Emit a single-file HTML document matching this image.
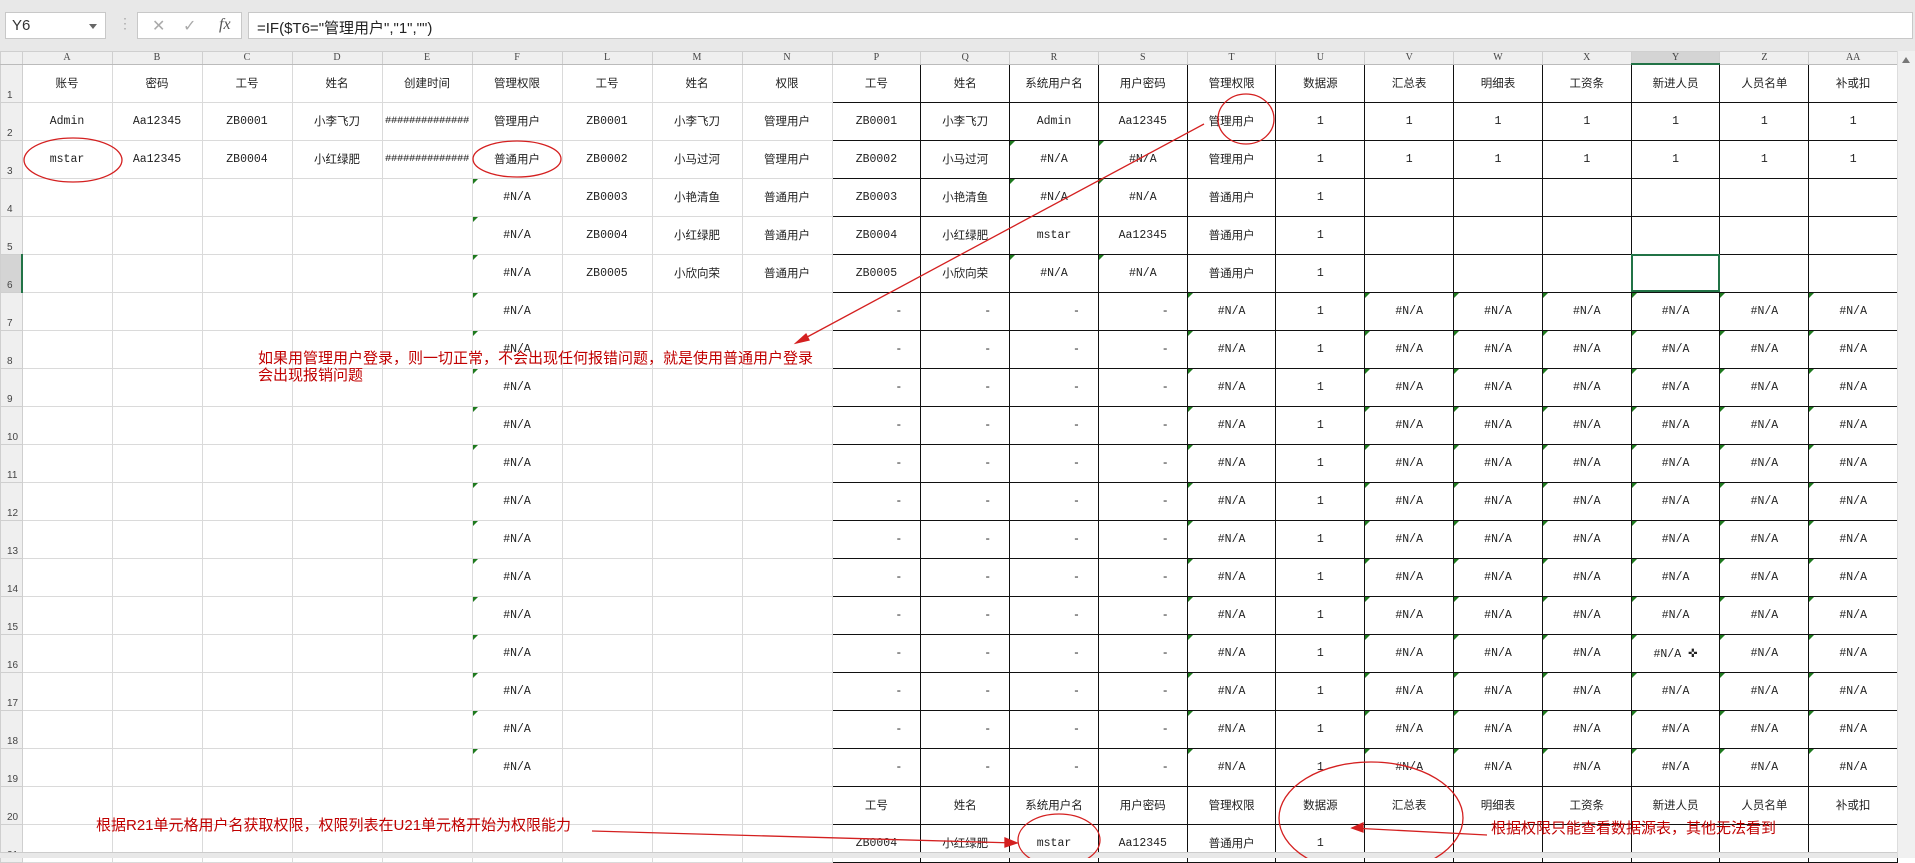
<!DOCTYPE html>
<html><head><meta charset="utf-8"><style>
*{margin:0;padding:0;box-sizing:border-box}
body{width:1915px;height:858px;overflow:hidden;background:#fff;position:relative;font-family:"Liberation Mono","Noto Sans CJK SC",monospace;}
.top{position:absolute;left:0;top:0;width:1915px;height:51px;background:#e8e8e8}
.nb{position:absolute;left:5px;top:12px;width:101px;height:27px;background:#fff;border:1px solid #c8c8c8;font:15px "Liberation Sans",sans-serif;color:#333;padding:4px 0 0 6px}
.nb:after{content:"";position:absolute;right:8px;top:11px;border:4px solid transparent;border-top:5px solid #666}
.fxb{position:absolute;left:137px;top:12px;width:105px;height:27px;background:#fff;border:1px solid #c8c8c8;color:#aaa;font:16px "Liberation Sans",sans-serif}
.fm{position:absolute;left:248px;top:12px;width:1665px;height:27px;background:#fff;border:1px solid #c8c8c8;font:15px "Liberation Sans","Noto Sans CJK SC",sans-serif;color:#222;padding:4px 0 0 8px}
table{position:absolute;left:0;top:51px;border-collapse:collapse;table-layout:fixed;width:1897.5px}
td{border:1px solid #dadada;text-align:center;font-size:11.5px;color:#222;white-space:nowrap;overflow:hidden;position:relative;height:38px;padding:0}
td.hs{font-size:10.5px;letter-spacing:-0.3px}
tr.h td{height:12.5px;background:#efefef;color:#444;font:10px "Liberation Serif",serif;border-color:#cfcfcf;border-bottom:1px solid #bbb}
td.r{background:#efefef;color:#444;font:10px "Liberation Sans",sans-serif;text-align:left;vertical-align:bottom;padding:0 0 1px 6px;border-color:#cfcfcf}
td.b{border:1.5px solid #111}
td.d{text-align:right;padding-right:18px}
td.g:before{content:"";position:absolute;left:0;top:0;border-left:5px solid #1e7a1e;border-bottom:5px solid transparent}
td.sel{outline:2px solid #217346;outline-offset:-2px}
.ann{position:absolute;color:#c00000;font:15px "Liberation Sans","Noto Sans CJK SC",sans-serif;line-height:17px}
.sb{position:absolute;left:1897px;top:51px;width:18px;height:807px;background:#f0f0f0;border-left:1px solid #ddd}
</style></head><body>
<div class="top">
<div class="nb">Y6</div>
<div style="position:absolute;left:118px;top:16px;color:#aaa;font-size:14px">⋮</div>
<div class="fxb"><span style="position:absolute;left:14px;top:3px">✕</span><span style="position:absolute;left:45px;top:3px">✓</span><span style="position:absolute;left:81px;top:3px;font-style:italic;font-family:'Liberation Serif',serif;color:#555">fx</span></div>
<div class="fm">=IF($T6="管理用户","1","")</div>
</div>
<table>
<colgroup><col style="width:21.5px"><col span="9" style="width:90px"><col span="12" style="width:88.8px"></colgroup>
<tr class="h"><td></td><td>A</td><td>B</td><td>C</td><td>D</td><td>E</td><td>F</td><td>L</td><td>M</td><td>N</td><td>P</td><td>Q</td><td>R</td><td>S</td><td>T</td><td>U</td><td>V</td><td>W</td><td>X</td><td style="background:#d4d4d4;border-bottom:2px solid #217346">Y</td><td>Z</td><td>AA</td></tr>
<tr><td class="r">1</td><td>账号</td><td>密码</td><td>工号</td><td>姓名</td><td>创建时间</td><td>管理权限</td><td>工号</td><td>姓名</td><td>权限</td><td class="b">工号</td><td class="b">姓名</td><td class="b">系统用户名</td><td class="b">用户密码</td><td class="b">管理权限</td><td class="b">数据源</td><td class="b">汇总表</td><td class="b">明细表</td><td class="b">工资条</td><td class="b">新进人员</td><td class="b">人员名单</td><td class="b">补或扣</td></tr>
<tr><td class="r">2</td><td>Admin</td><td>Aa12345</td><td>ZB0001</td><td>小李飞刀</td><td class="hs">##############</td><td>管理用户</td><td>ZB0001</td><td>小李飞刀</td><td>管理用户</td><td class="b">ZB0001</td><td class="b">小李飞刀</td><td class="b">Admin</td><td class="b">Aa12345</td><td class="b">管理用户</td><td class="b">1</td><td class="b">1</td><td class="b">1</td><td class="b">1</td><td class="b">1</td><td class="b">1</td><td class="b">1</td></tr>
<tr><td class="r">3</td><td>mstar</td><td>Aa12345</td><td>ZB0004</td><td>小红绿肥</td><td class="hs">##############</td><td>普通用户</td><td>ZB0002</td><td>小马过河</td><td>管理用户</td><td class="b">ZB0002</td><td class="b">小马过河</td><td class="b g">#N/A</td><td class="b g">#N/A</td><td class="b">管理用户</td><td class="b">1</td><td class="b">1</td><td class="b">1</td><td class="b">1</td><td class="b">1</td><td class="b">1</td><td class="b">1</td></tr>
<tr><td class="r">4</td><td></td><td></td><td></td><td></td><td></td><td class="g">#N/A</td><td>ZB0003</td><td>小艳清鱼</td><td>普通用户</td><td class="b">ZB0003</td><td class="b">小艳清鱼</td><td class="b g">#N/A</td><td class="b g">#N/A</td><td class="b">普通用户</td><td class="b">1</td><td class="b"></td><td class="b"></td><td class="b"></td><td class="b"></td><td class="b"></td><td class="b"></td></tr>
<tr><td class="r">5</td><td></td><td></td><td></td><td></td><td></td><td class="g">#N/A</td><td>ZB0004</td><td>小红绿肥</td><td>普通用户</td><td class="b">ZB0004</td><td class="b">小红绿肥</td><td class="b">mstar</td><td class="b">Aa12345</td><td class="b">普通用户</td><td class="b">1</td><td class="b"></td><td class="b"></td><td class="b"></td><td class="b"></td><td class="b"></td><td class="b"></td></tr>
<tr><td class="r" style="background:#d4d4d4;border-right:2px solid #217346">6</td><td></td><td></td><td></td><td></td><td></td><td class="g">#N/A</td><td>ZB0005</td><td>小欣向荣</td><td>普通用户</td><td class="b">ZB0005</td><td class="b">小欣向荣</td><td class="b g">#N/A</td><td class="b g">#N/A</td><td class="b">普通用户</td><td class="b">1</td><td class="b"></td><td class="b"></td><td class="b"></td><td class="b sel"></td><td class="b"></td><td class="b"></td></tr>
<tr><td class="r">7</td><td></td><td></td><td></td><td></td><td></td><td class="g">#N/A</td><td></td><td></td><td></td><td class="b d">-</td><td class="b d">-</td><td class="b d">-</td><td class="b d">-</td><td class="b g">#N/A</td><td class="b">1</td><td class="b g">#N/A</td><td class="b g">#N/A</td><td class="b g">#N/A</td><td class="b g">#N/A</td><td class="b g">#N/A</td><td class="b g">#N/A</td></tr>
<tr><td class="r">8</td><td></td><td></td><td></td><td></td><td></td><td class="g">#N/A</td><td></td><td></td><td></td><td class="b d">-</td><td class="b d">-</td><td class="b d">-</td><td class="b d">-</td><td class="b g">#N/A</td><td class="b">1</td><td class="b g">#N/A</td><td class="b g">#N/A</td><td class="b g">#N/A</td><td class="b g">#N/A</td><td class="b g">#N/A</td><td class="b g">#N/A</td></tr>
<tr><td class="r">9</td><td></td><td></td><td></td><td></td><td></td><td class="g">#N/A</td><td></td><td></td><td></td><td class="b d">-</td><td class="b d">-</td><td class="b d">-</td><td class="b d">-</td><td class="b g">#N/A</td><td class="b">1</td><td class="b g">#N/A</td><td class="b g">#N/A</td><td class="b g">#N/A</td><td class="b g">#N/A</td><td class="b g">#N/A</td><td class="b g">#N/A</td></tr>
<tr><td class="r">10</td><td></td><td></td><td></td><td></td><td></td><td class="g">#N/A</td><td></td><td></td><td></td><td class="b d">-</td><td class="b d">-</td><td class="b d">-</td><td class="b d">-</td><td class="b g">#N/A</td><td class="b">1</td><td class="b g">#N/A</td><td class="b g">#N/A</td><td class="b g">#N/A</td><td class="b g">#N/A</td><td class="b g">#N/A</td><td class="b g">#N/A</td></tr>
<tr><td class="r">11</td><td></td><td></td><td></td><td></td><td></td><td class="g">#N/A</td><td></td><td></td><td></td><td class="b d">-</td><td class="b d">-</td><td class="b d">-</td><td class="b d">-</td><td class="b g">#N/A</td><td class="b">1</td><td class="b g">#N/A</td><td class="b g">#N/A</td><td class="b g">#N/A</td><td class="b g">#N/A</td><td class="b g">#N/A</td><td class="b g">#N/A</td></tr>
<tr><td class="r">12</td><td></td><td></td><td></td><td></td><td></td><td class="g">#N/A</td><td></td><td></td><td></td><td class="b d">-</td><td class="b d">-</td><td class="b d">-</td><td class="b d">-</td><td class="b g">#N/A</td><td class="b">1</td><td class="b g">#N/A</td><td class="b g">#N/A</td><td class="b g">#N/A</td><td class="b g">#N/A</td><td class="b g">#N/A</td><td class="b g">#N/A</td></tr>
<tr><td class="r">13</td><td></td><td></td><td></td><td></td><td></td><td class="g">#N/A</td><td></td><td></td><td></td><td class="b d">-</td><td class="b d">-</td><td class="b d">-</td><td class="b d">-</td><td class="b g">#N/A</td><td class="b">1</td><td class="b g">#N/A</td><td class="b g">#N/A</td><td class="b g">#N/A</td><td class="b g">#N/A</td><td class="b g">#N/A</td><td class="b g">#N/A</td></tr>
<tr><td class="r">14</td><td></td><td></td><td></td><td></td><td></td><td class="g">#N/A</td><td></td><td></td><td></td><td class="b d">-</td><td class="b d">-</td><td class="b d">-</td><td class="b d">-</td><td class="b g">#N/A</td><td class="b">1</td><td class="b g">#N/A</td><td class="b g">#N/A</td><td class="b g">#N/A</td><td class="b g">#N/A</td><td class="b g">#N/A</td><td class="b g">#N/A</td></tr>
<tr><td class="r">15</td><td></td><td></td><td></td><td></td><td></td><td class="g">#N/A</td><td></td><td></td><td></td><td class="b d">-</td><td class="b d">-</td><td class="b d">-</td><td class="b d">-</td><td class="b g">#N/A</td><td class="b">1</td><td class="b g">#N/A</td><td class="b g">#N/A</td><td class="b g">#N/A</td><td class="b g">#N/A</td><td class="b g">#N/A</td><td class="b g">#N/A</td></tr>
<tr><td class="r">16</td><td></td><td></td><td></td><td></td><td></td><td class="g">#N/A</td><td></td><td></td><td></td><td class="b d">-</td><td class="b d">-</td><td class="b d">-</td><td class="b d">-</td><td class="b g">#N/A</td><td class="b">1</td><td class="b g">#N/A</td><td class="b g">#N/A</td><td class="b g">#N/A</td><td class="b g">#N/A ✜</td><td class="b g">#N/A</td><td class="b g">#N/A</td></tr>
<tr><td class="r">17</td><td></td><td></td><td></td><td></td><td></td><td class="g">#N/A</td><td></td><td></td><td></td><td class="b d">-</td><td class="b d">-</td><td class="b d">-</td><td class="b d">-</td><td class="b g">#N/A</td><td class="b">1</td><td class="b g">#N/A</td><td class="b g">#N/A</td><td class="b g">#N/A</td><td class="b g">#N/A</td><td class="b g">#N/A</td><td class="b g">#N/A</td></tr>
<tr><td class="r">18</td><td></td><td></td><td></td><td></td><td></td><td class="g">#N/A</td><td></td><td></td><td></td><td class="b d">-</td><td class="b d">-</td><td class="b d">-</td><td class="b d">-</td><td class="b g">#N/A</td><td class="b">1</td><td class="b g">#N/A</td><td class="b g">#N/A</td><td class="b g">#N/A</td><td class="b g">#N/A</td><td class="b g">#N/A</td><td class="b g">#N/A</td></tr>
<tr><td class="r">19</td><td></td><td></td><td></td><td></td><td></td><td class="g">#N/A</td><td></td><td></td><td></td><td class="b d">-</td><td class="b d">-</td><td class="b d">-</td><td class="b d">-</td><td class="b g">#N/A</td><td class="b">1</td><td class="b g">#N/A</td><td class="b g">#N/A</td><td class="b g">#N/A</td><td class="b g">#N/A</td><td class="b g">#N/A</td><td class="b g">#N/A</td></tr>
<tr><td class="r">20</td><td></td><td></td><td></td><td></td><td></td><td></td><td></td><td></td><td></td><td class="b">工号</td><td class="b">姓名</td><td class="b">系统用户名</td><td class="b">用户密码</td><td class="b">管理权限</td><td class="b">数据源</td><td class="b">汇总表</td><td class="b">明细表</td><td class="b">工资条</td><td class="b">新进人员</td><td class="b">人员名单</td><td class="b">补或扣</td></tr>
<tr><td class="r">21</td><td></td><td></td><td></td><td></td><td></td><td></td><td></td><td></td><td></td><td class="b">ZB0004</td><td class="b">小红绿肥</td><td class="b">mstar</td><td class="b">Aa12345</td><td class="b">普通用户</td><td class="b">1</td><td class="b"></td><td class="b"></td><td class="b"></td><td class="b"></td><td class="b"></td><td class="b"></td></tr>
</table>
<div class="sb"><div style="position:absolute;left:4px;top:6px;border:4px solid transparent;border-bottom:6px solid #777;border-top:0"></div></div>
<div style="position:absolute;left:0;top:852px;width:1897px;height:6px;background:#e8e8e8;border-top:1px solid #ccc"></div>
<div class="ann" style="left:258px;top:350px">如果用管理用户登录，则一切正常，不会出现任何报错问题，就是使用普通用户登录<br>会出现报销问题</div>
<div class="ann" style="left:96px;top:817px">根据R21单元格用户名获取权限，权限列表在U21单元格开始为权限能力</div>
<div class="ann" style="left:1491px;top:820px">根据权限只能查看数据源表，其他无法看到</div>
<svg width="1915" height="858" style="position:absolute;left:0;top:0;pointer-events:none" fill="none" stroke="#d42020" stroke-width="1.3">
<ellipse cx="73" cy="160" rx="49" ry="22"/>
<ellipse cx="517" cy="159" rx="44" ry="18"/>
<ellipse cx="1246" cy="119" rx="28" ry="25"/>
<ellipse cx="1059" cy="840" rx="41" ry="26"/>
<ellipse cx="1371" cy="818" rx="92" ry="56"/>
<line x1="1204" y1="124" x2="796" y2="343"/>
<path d="M796 343 L806 334 L809 340 Z" fill="#d42020"/>
<line x1="592" y1="831" x2="1015" y2="843"/>
<path d="M1017 843 L1005 838 L1005 847 Z" fill="#d42020"/>
<line x1="1487" y1="835" x2="1352" y2="828"/>
<path d="M1352 828 L1363 823 L1363 832 Z" fill="#d42020"/>
</svg>
</body></html>
